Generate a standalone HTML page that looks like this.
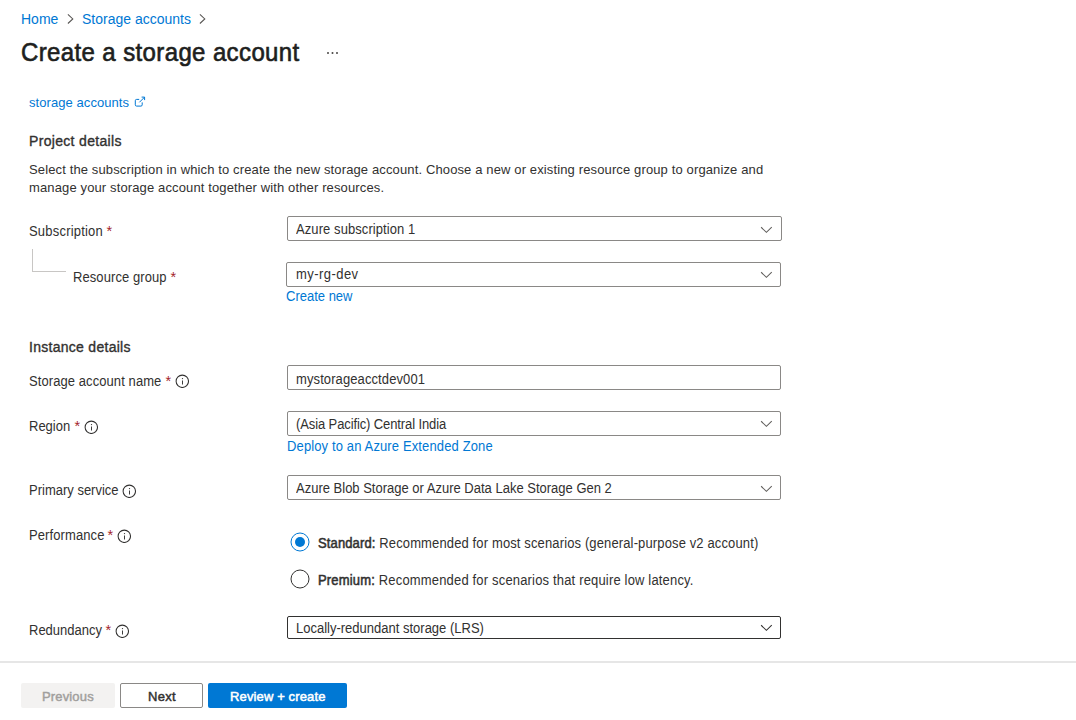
<!DOCTYPE html>
<html><head><meta charset="utf-8">
<style>
html,body{margin:0;padding:0;background:#fff;width:1076px;height:720px;overflow:hidden;}
body{position:relative;font-family:"Liberation Sans",sans-serif;color:#323130;}
.t{position:absolute;white-space:nowrap;line-height:20px;font-size:13px;transform:scaleY(1.06);transform-origin:0 14px;}
.ns{transform:none;}
.lnk{color:#0078d4;}
.b14{font-size:14px;-webkit-text-stroke:0.35px #323130;}
.sb{-webkit-text-stroke:0.5px currentColor;}
.req{position:absolute;color:#a4262c;font-size:13px;line-height:20px;transform:translate(0.9px,-0.6px) scale(1.12);transform-origin:3px 7px;}
.box{position:absolute;box-sizing:border-box;border:1px solid #8a8886;border-radius:2px;background:#fff;}
.chev{position:absolute;width:13px;height:8px;}
.info{position:absolute;width:14px;height:14px;}
.sep{position:absolute;left:0;top:661px;width:1076px;height:2px;background:#e6e6e6;}
.btn{position:absolute;box-sizing:border-box;height:25px;top:683px;border-radius:2px;}
.radio{position:absolute;width:20px;height:20px;}
</style></head>
<body>
<!-- breadcrumb -->
<div class="t lnk" style="left:21px;top:9px;font-size:14px;">Home</div>
<svg class="chev" style="left:66px;top:13px;width:8px;height:12px" viewBox="0 0 8 12"><path d="M1.9 1.3 L6.8 5.9 L1.9 10.5" fill="none" stroke="#575553" stroke-width="1.05"/></svg>
<div class="t lnk" style="left:82px;top:9px;font-size:14px;">Storage accounts</div>
<svg class="chev" style="left:198px;top:13px;width:8px;height:12px" viewBox="0 0 8 12"><path d="M1.9 1.3 L6.8 5.9 L1.9 10.5" fill="none" stroke="#575553" stroke-width="1.05"/></svg>

<!-- title -->
<div class="t sb" style="left:21px;top:37px;font-size:24px;line-height:30px;color:#201f1e;letter-spacing:0.38px;-webkit-text-stroke:0.6px #201f1e;">Create a storage account</div>
<svg style="position:absolute;left:325px;top:51px" width="16" height="4" viewBox="0 0 16 4"><circle cx="3" cy="2.1" r="1" fill="#484644"/><circle cx="7.5" cy="2.1" r="1" fill="#484644"/><circle cx="12" cy="2.1" r="1" fill="#484644"/></svg>

<!-- storage accounts link -->
<div class="t lnk ns" style="left:29px;top:93px;letter-spacing:0.07px;">storage accounts</div>
<svg style="position:absolute;left:133px;top:95px" width="14" height="14" viewBox="0 0 14 14"><path d="M6.2 4.4 H3.6 Q2.3 4.4 2.3 5.7 V9.8 Q2.3 11.1 3.6 11.1 H7.9 Q9.2 11.1 9.2 9.8 V7.4" fill="none" stroke="#0078d4" stroke-width="1"/><path d="M6.4 7.3 L11.5 2.2 M8.6 2.1 H11.6 V5.1" fill="none" stroke="#0078d4" stroke-width="1"/></svg>

<div class="t b14" style="left:29px;top:131px;letter-spacing:0.32px;">Project details</div>
<div class="t ns" style="left:29px;top:160px;letter-spacing:0.13px;">Select the subscription in which to create the new storage account. Choose a new or existing resource group to organize and</div>
<div class="t ns" style="left:29px;top:178px;letter-spacing:0.13px;">manage your storage account together with other resources.</div>

<!-- subscription -->
<div class="t" style="left:29px;top:222px;letter-spacing:0.2px;">Subscription</div>
<div class="req" style="left:106px;top:222px;">*</div>
<div class="box" style="left:287px;top:216px;width:495px;height:25px;"></div>
<div class="t" style="left:296px;top:220px;letter-spacing:0.08px;">Azure subscription 1</div>
<svg class="chev" style="left:760px;top:226px" viewBox="0 0 13 8"><path d="M1.1 1.25 L6.4 6.3 L11.75 1.1" fill="none" stroke="#605e5c" stroke-width="1.05"/></svg>

<!-- tree -->
<div style="position:absolute;left:32px;top:249px;width:1px;height:23px;background:#c8c6c4"></div>
<div style="position:absolute;left:32px;top:271px;width:34px;height:1px;background:#c8c6c4"></div>

<div class="t" style="left:73px;top:268px;letter-spacing:0.08px;">Resource group</div>
<div class="req" style="left:170px;top:268px;">*</div>
<div class="box" style="left:286px;top:262px;width:495px;height:25px;"></div>
<div class="t" style="left:296px;top:265px;letter-spacing:0.45px;">my-rg-dev</div>
<svg class="chev" style="left:760px;top:271px" viewBox="0 0 13 8"><path d="M1.1 1.25 L6.4 6.3 L11.75 1.1" fill="none" stroke="#605e5c" stroke-width="1.05"/></svg>
<div class="t lnk" style="left:286px;top:287px;">Create new</div>

<!-- instance details -->
<div class="t b14" style="left:29px;top:337px;letter-spacing:0.28px;">Instance details</div>

<div class="t" style="left:29px;top:372px;letter-spacing:0.08px;">Storage account name</div>
<div class="req" style="left:165px;top:372px;">*</div>
<svg class="info" style="left:175px;top:374px" viewBox="0 0 14 14"><circle cx="7.3" cy="7.3" r="6.2" fill="none" stroke="#323130" stroke-width="1.05"/><circle cx="7.5" cy="4.6" r="0.65" fill="#323130"/><path d="M7.5 6.5 V10.5" stroke="#323130" stroke-width="0.95"/></svg>
<div class="box" style="left:287px;top:365px;width:494px;height:25px;"></div>
<div class="t" style="left:296px;top:370px;letter-spacing:0.1px;">mystorageacctdev001</div>

<div class="t" style="left:29px;top:417px;">Region</div>
<div class="req" style="left:74px;top:417px;">*</div>
<svg class="info" style="left:84px;top:420px" viewBox="0 0 14 14"><circle cx="7.3" cy="7.3" r="6.2" fill="none" stroke="#323130" stroke-width="1.05"/><circle cx="7.5" cy="4.6" r="0.65" fill="#323130"/><path d="M7.5 6.5 V10.5" stroke="#323130" stroke-width="0.95"/></svg>
<div class="box" style="left:287px;top:411px;width:494px;height:25px;"></div>
<div class="t" style="left:296px;top:415px;letter-spacing:-0.11px;">(Asia Pacific) Central India</div>
<svg class="chev" style="left:760px;top:420px" viewBox="0 0 13 8"><path d="M1.1 1.25 L6.4 6.3 L11.75 1.1" fill="none" stroke="#605e5c" stroke-width="1.05"/></svg>
<div class="t lnk" style="left:287px;top:437px;letter-spacing:0.13px;">Deploy to an Azure Extended Zone</div>

<div class="t" style="left:29px;top:481px;">Primary service</div>
<svg class="info" style="left:122px;top:484px" viewBox="0 0 14 14"><circle cx="7.3" cy="7.3" r="6.2" fill="none" stroke="#323130" stroke-width="1.05"/><circle cx="7.5" cy="4.6" r="0.65" fill="#323130"/><path d="M7.5 6.5 V10.5" stroke="#323130" stroke-width="0.95"/></svg>
<div class="box" style="left:287px;top:475px;width:494px;height:25px;"></div>
<div class="t" style="left:296px;top:479px;">Azure Blob Storage or Azure Data Lake Storage Gen 2</div>
<svg class="chev" style="left:760px;top:485px" viewBox="0 0 13 8"><path d="M1.1 1.25 L6.4 6.3 L11.75 1.1" fill="none" stroke="#605e5c" stroke-width="1.05"/></svg>

<div class="t" style="left:29px;top:526px;letter-spacing:0.1px;">Performance</div>
<div class="req" style="left:107px;top:526px;">*</div>
<svg class="info" style="left:117px;top:529px" viewBox="0 0 14 14"><circle cx="7.3" cy="7.3" r="6.2" fill="none" stroke="#323130" stroke-width="1.05"/><circle cx="7.5" cy="4.6" r="0.65" fill="#323130"/><path d="M7.5 6.5 V10.5" stroke="#323130" stroke-width="0.95"/></svg>

<svg class="radio" style="left:290px;top:532px" viewBox="0 0 20 20"><circle cx="10" cy="10" r="9" fill="#fff" stroke="#0078d4" stroke-width="1"/><circle cx="10" cy="10" r="5" fill="#0078d4"/></svg>
<div class="t" style="left:318px;top:534px;letter-spacing:0.13px;"><span class="sb">Standard:</span> Recommended for most scenarios (general-purpose v2 account)</div>
<svg class="radio" style="left:290px;top:569px" viewBox="0 0 20 20"><circle cx="10" cy="10" r="9" fill="#fff" stroke="#323130" stroke-width="1"/></svg>
<div class="t" style="left:318px;top:571px;letter-spacing:0.17px;"><span class="sb">Premium:</span> Recommended for scenarios that require low latency.</div>

<div class="t" style="left:29px;top:621px;">Redundancy</div>
<div class="req" style="left:105px;top:621px;">*</div>
<svg class="info" style="left:115px;top:624px" viewBox="0 0 14 14"><circle cx="7.3" cy="7.3" r="6.2" fill="none" stroke="#323130" stroke-width="1.05"/><circle cx="7.5" cy="4.6" r="0.65" fill="#323130"/><path d="M7.5 6.5 V10.5" stroke="#323130" stroke-width="0.95"/></svg>
<div class="box" style="left:287px;top:616px;width:494px;height:23px;border-color:#323130;border-radius:2px;"></div>
<div class="t" style="left:296px;top:619px;">Locally-redundant storage (LRS)</div>
<svg class="chev" style="left:760px;top:624px" viewBox="0 0 13 8"><path d="M1.1 1.25 L6.4 6.3 L11.75 1.1" fill="none" stroke="#323130" stroke-width="1.05"/></svg>

<div class="sep"></div>

<div class="btn" style="left:21px;width:94px;background:#f3f2f1;"></div>
<div class="t ns" style="left:42px;top:687px;color:#a19f9d;-webkit-text-stroke:0.45px #a19f9d;letter-spacing:0.15px;">Previous</div>
<div class="btn" style="left:120px;width:83px;border:1px solid #8a8886;background:#fff;"></div>
<div class="t ns" style="left:148px;top:687px;-webkit-text-stroke:0.45px #323130;letter-spacing:0.3px;">Next</div>
<div class="btn" style="left:208px;width:139px;background:#0078d4;"></div>
<div class="t ns" style="left:230px;top:687px;color:#fff;-webkit-text-stroke:0.5px #fff;letter-spacing:0.13px;">Review + create</div>
</body></html>
